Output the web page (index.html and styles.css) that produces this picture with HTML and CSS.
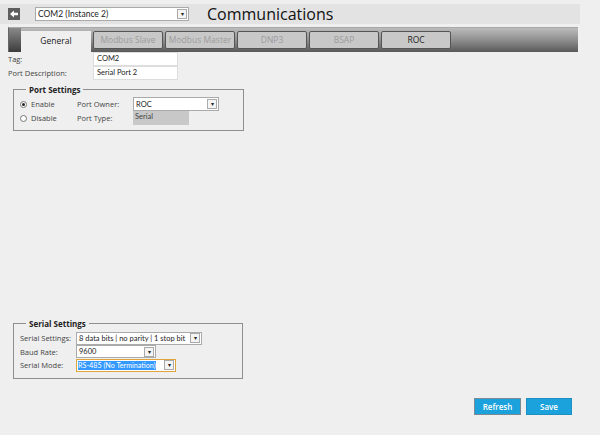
FILE: index.html
```html
<!DOCTYPE html>
<html>
	<head>
		<meta charset="UTF-8">
		<title>Communications</title>
		<link rel="stylesheet" href="styles.css">
	</head>
	<body>
		<div class="topbar">
			<div class="back-btn">
				<svg width="8" height="8" viewBox="0 0 8 8"><path d="M0 4 L4 0.5 L4 2.8 L8 2.8 L8 5.2 L4 5.2 L4 7.5 Z" fill="#fff"/></svg>
			</div>
			<div class="combo instance-combo">
				<span class="combo-text">COM2 (Instance 2)</span>
				<span class="combo-arrow">&#9662;</span>
			</div>
			<h1 class="title">Communications</h1>
		</div>

		<div class="tabbar">
			<div class="tab active">General</div>
			<div class="tab disabled">Modbus Slave</div>
			<div class="tab disabled">Modbus Master</div>
			<div class="tab disabled">DNP3</div>
			<div class="tab disabled">BSAP</div>
			<div class="tab">ROC</div>
		</div>

		<div class="content">
			<div class="field-row">
				<span class="label">Tag:</span>
				<div class="textbox">COM2</div>
			</div>
			<div class="field-row">
				<span class="label">Port Description:</span>
				<div class="textbox">Serial Port 2</div>
			</div>

			<fieldset class="group port-group">
				<legend>Port Settings</legend>
				<div class="port-grid">
					<div class="radio checked"><span class="radio-dot"></span>Enable</div>
					<span class="label">Port Owner:</span>
					<div class="combo owner-combo">
						<span class="combo-text">ROC</span>
						<span class="combo-arrow">&#9662;</span>
					</div>
					<div class="radio"><span class="radio-dot"></span>Disable</div>
					<span class="label">Port Type:</span>
					<div class="readonly">Serial</div>
				</div>
			</fieldset>

			<fieldset class="group serial-group">
				<legend>Serial Settings</legend>
				<div class="serial-grid">
					<span class="label">Serial Settings:</span>
					<div class="combo bits-combo">
						<span class="combo-text">8 data bits | no parity | 1 stop bit</span>
						<span class="combo-arrow">&#9662;</span>
					</div>
					<span class="label">Baud Rate:</span>
					<div class="combo baud-combo">
						<span class="combo-text">9600</span>
						<span class="combo-arrow">&#9662;</span>
					</div>
					<span class="label">Serial Mode:</span>
					<div class="combo mode-combo focused">
						<span class="combo-text"><span class="selected">RS-485 (No Termination)</span></span>
						<span class="combo-arrow">&#9662;</span>
					</div>
				</div>
			</fieldset>
		</div>

		<div class="actions">
			<button class="action-btn refresh">Refresh</button>
			<button class="action-btn save">Save</button>
		</div>
	</body>
</html>
```

FILE: styles.css
```css
* {
	box-sizing: border-box;
	margin: 0;
	padding: 0;
}
body, html {
	width: 600px;
	height: 435px;
	background: #efefef;
	font-family: 'Open Sans', 'Noto Sans', sans-serif;
	font-size: 7.5px;
	color: #333;
	overflow: hidden;
}

/* header */
.topbar {
	display: flex;
	align-items: center;
	height: 20px;
	margin: 4px 20px 0 0;
	padding-left: 8px;
	background: #e3e3e3;
}
.back-btn {
	display: flex;
	align-items: center;
	justify-content: center;
	width: 12px;
	height: 12px;
	background: #5e5e5e;
}
.title {
	margin-left: 18px;
	font-weight: normal;
	font-size: 16px;
	line-height: 20px;
	color: #111;
	font-family: 'Open Sans', sans-serif;
}

/* combo boxes */
.combo {
	display: flex;
	align-items: center;
	height: 14px;
	background: #fff;
	border: 1px solid #aaa;
}
.combo-text {
	flex: 1;
	padding-left: 2px;
	white-space: nowrap;
	overflow: hidden;
	font-family: 'Lato', sans-serif;
	font-size: 7.5px;
	color: #222;
}
.combo-arrow {
	flex: none;
	width: 10px;
	height: 10px;
	margin-right: 1px;
	border: 1px solid #aaa;
	background: #f4f4f4;
	font-size: 6px;
	line-height: 8px;
	text-align: center;
	color: #222;
}
.instance-combo {
	width: 154px;
	margin-left: 15px;
}
.instance-combo .combo-text {
	font-size: 8.5px;
}

/* tabs */
.tabbar {
	display: flex;
	align-items: flex-start;
	gap: 2px;
	width: 570px;
	height: 25px;
	margin: 3px 0 0 8px;
	padding: 3px 0 0 12px;
	background: linear-gradient(180deg, #bcbcbc 0%, #8a8a8a 55%, #595959 100%);
	border-top: 1px solid #a8a8a8;
	border-left: 1px solid #666;
	position: relative;
}
.tabbar::before {
	content: "";
	position: absolute;
	left: 0;
	top: 0;
	width: 12px;
	height: 24px;
	background: linear-gradient(180deg, #8a8a8a 0%, #3c3c3c 100%);
}
.tab {
	width: 70px;
	height: 18px;
	border: 1px solid #555;
	border-radius: 2px;
	background: #c8c8c8;
	text-align: center;
	line-height: 16px;
	font-size: 8.5px;
	color: #222;
}
.tab.disabled {
	color: #9c9c9c;
}
.tab.active {
	height: 21px;
	border: none;
	border-radius: 0;
	background: #efefef;
	color: #222;
	line-height: 19px;
}

/* form */
.content {
	padding-left: 8px;
}
.field-row {
	display: flex;
	align-items: center;
	height: 14px;
}
.field-row .label {
	width: 85px;
}
.textbox {
	width: 85px;
	height: 14px;
	background: #fff;
	border: 1px solid #ddd;
	padding-left: 3px;
	line-height: 12px;
	font-family: 'Lato', sans-serif;
	font-size: 7.5px;
	color: #222;
}
.label {
	color: #444;
}

.group {
	border: 1px solid #8f8f8f;
	margin-left: 5px;
	padding: 0 6px;
}
.group legend {
	margin-left: 6px;
	padding: 0 3px;
	font-weight: bold;
	font-size: 8px;
	color: #222;
}
.port-group {
	width: 231px;
	height: 47px;
	margin-top: 4px;
}
.port-grid {
	display: grid;
	grid-template-columns: 57px 56px 86px;
	grid-template-rows: 14px 14px;
	align-items: center;
	margin-top: 2px;
}
.radio {
	display: flex;
	align-items: center;
	gap: 4px;
	color: #444;
}
.radio-dot {
	width: 7px;
	height: 7px;
	border: 1px solid #777;
	border-radius: 50%;
	background: #fff;
	position: relative;
}
.radio.checked .radio-dot::after {
	content: "";
	position: absolute;
	left: 1px;
	top: 1px;
	width: 3px;
	height: 3px;
	border-radius: 50%;
	background: #222;
}
.owner-combo {
	width: 86px;
	height: 14px;
}
.readonly {
	width: 56px;
	height: 14px;
	background: #c8c8c8;
	padding-left: 2px;
	line-height: 11px;
	font-family: 'Lato', sans-serif;
	color: #444;
}

.serial-group {
	width: 230px;
	height: 61px;
	margin-top: 187px;
}
.serial-grid {
	display: grid;
	grid-template-columns: 56px auto;
	grid-template-rows: 14px 13px 14px;
	align-items: center;
	justify-items: start;
	margin-top: 2px;
}
.serial-grid .combo {
	height: 13px;
}
.bits-combo {
	width: 126px;
}
.baud-combo {
	width: 80px;
}
.mode-combo {
	width: 100px;
}
.mode-combo .combo-text {
	padding-left: 1px;
	font-size: 7.2px;
}
.mode-combo.focused {
	border-color: #e0a43a;
}
.selected {
	background: #3399ff;
	color: #fff;
	padding: 1px 0;
}

/* buttons */
.actions {
	display: flex;
	justify-content: flex-end;
	gap: 5px;
	margin: 19px 28px 0 0;
}
.action-btn {
	width: 46px;
	height: 17px;
	border: 1px solid #1e8fc0;
	background: #1ba1dc;
	color: #fff;
	font-family: 'Open Sans', sans-serif;
	font-size: 8px;
	font-weight: 600;
}
.action-btn.refresh {
	width: 47px;
	border-color: #7a8a94;
}
```
